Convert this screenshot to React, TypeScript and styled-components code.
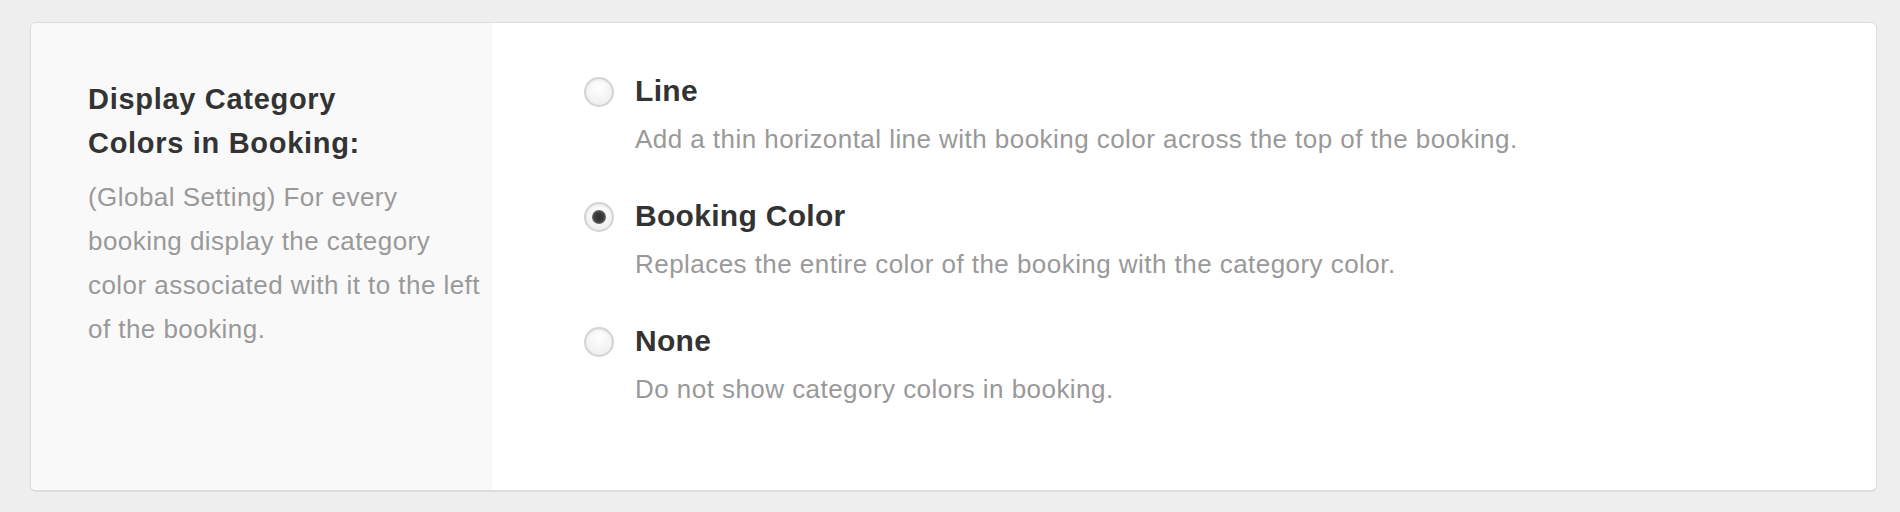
import React from "react";
import styled, { createGlobalStyle } from "styled-components";

const Global = createGlobalStyle`
  html, body {
    margin: 0;
    padding: 0;
    background: #eeeeee;
    font-family: "Liberation Sans", Arial, Helvetica, sans-serif;
  }
  * { box-sizing: border-box; }
`;

const Page = styled.div`
  padding: 22px 23px 0 30px;
`;

const Card = styled.div`
  display: flex;
  background: #ffffff;
  border: 1px solid #dcdcdc;
  border-bottom-width: 2px;
  border-radius: 6px;
  overflow: hidden;
`;

const Side = styled.div`
  width: 461px;
  flex: none;
  background: #f9f9f9;
  padding: 54px 3px 0 57px;
  border-right: 1px solid #f3f3f3;
`;

const Heading = styled.h2`
  margin: 0;
  font-size: 29px;
  line-height: 44px;
  font-weight: bold;
  letter-spacing: 0.7px;
  color: #333333;
`;

const SideText = styled.p`
  margin: 10px 0 0;
  font-size: 26px;
  line-height: 44px;
  letter-spacing: 0.45px;
  color: #999999;
`;

const Options = styled.div`
  flex: 1;
  padding: 50px 0 83px 92px;
  display: flex;
  flex-direction: column;
  gap: 41px;
`;

const Option = styled.label`
  display: flex;
  flex-direction: column;
  gap: 12px;
  cursor: pointer;
`;

const OptionHead = styled.div`
  display: flex;
  align-items: center;
  gap: 21px;
`;

const Radio = styled.span<{ $checked?: boolean }>`
  width: 30px;
  height: 30px;
  flex: none;
  border-radius: 50%;
  border: 2px solid #d4d4d4;
  background: radial-gradient(circle at 50% 35%, #ffffff 0%, #f1f1f1 70%, #e6e6e6 100%);
  box-shadow: inset 0 1px 2px rgba(0, 0, 0, 0.06);
  display: flex;
  align-items: center;
  justify-content: center;
  margin-top: 2px;

  &::after {
    content: "";
    display: ${(p) => (p.$checked ? "block" : "none")};
    width: 14px;
    height: 14px;
    border-radius: 50%;
    background: radial-gradient(circle, #2e2e2e 0%, #3c3c3c 45%, #777777 80%, #b5b5b5 100%);
  }
`;

const OptionTitle = styled.span`
  font-size: 30px;
  line-height: 36px;
  font-weight: bold;
  letter-spacing: 0.3px;
  color: #333333;
`;

const OptionText = styled.span`
  padding-left: 51px;
  font-size: 26px;
  line-height: 36px;
  letter-spacing: 0.45px;
  color: #999999;
`;

const options = [
  {
    title: "Line",
    text: "Add a thin horizontal line with booking color across the top of the booking.",
    checked: false,
  },
  {
    title: "Booking Color",
    text: "Replaces the entire color of the booking with the category color.",
    checked: true,
  },
  {
    title: "None",
    text: "Do not show category colors in booking.",
    checked: false,
  },
];

export default function App() {
  return (
    <Page>
      <Global />
      <Card>
        <Side>
          <Heading>
            Display Category
            <br />
            Colors in Booking:
          </Heading>
          <SideText>
            (Global Setting) For every booking display the category color associated with it to the left of the booking.
          </SideText>
        </Side>
        <Options>
          {options.map((o) => (
            <Option key={o.title}>
              <OptionHead>
                <Radio $checked={o.checked} />
                <OptionTitle>{o.title}</OptionTitle>
              </OptionHead>
              <OptionText>{o.text}</OptionText>
            </Option>
          ))}
        </Options>
      </Card>
    </Page>
  );
}
